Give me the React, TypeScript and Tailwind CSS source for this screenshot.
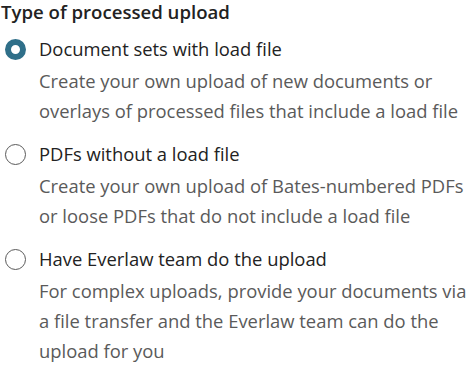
import React, { useState } from 'react';

const options = [
  {
    id: 'load',
    label: 'Document sets with load file',
    desc: 'Create your own upload of new documents or overlays of processed files that include a load file',
  },
  {
    id: 'pdf',
    label: 'PDFs without a load file',
    desc: 'Create your own upload of Bates-numbered PDFs or loose PDFs that do not include a load file',
  },
  {
    id: 'team',
    label: 'Have Everlaw team do the upload',
    desc: 'For complex uploads, provide your documents via a file transfer and the Everlaw team can do the upload for you',
  },
];

export default function App() {
  const [selected, setSelected] = useState('load');

  return (
    <div className="w-[474px] h-[367px] bg-white overflow-hidden" style={{ fontFamily: '"Open Sans", sans-serif' }}>
      <div className="text-[18.6px] leading-[24px] font-semibold text-[#222] pl-[1px]">Type of processed upload</div>
      <div className="flex flex-col gap-[13px] mt-[10px]">
        {options.map(opt => (
          <label key={opt.id} className="flex gap-[13px] cursor-pointer" onClick={() => setSelected(opt.id)}>
            <span className="pt-[5px] pl-[5px] shrink-0">
              {selected === opt.id ? (
                <span className="block w-[21px] h-[21px] rounded-full border-[6px] border-[#2f6f89] bg-white" />
              ) : (
                <span className="block w-[21px] h-[21px] rounded-full border-[1.5px] border-[#5a5a5a] bg-white" />
              )}
            </span>
            <span className="flex flex-col">
              <span className="text-[18.4px] leading-[30px] text-[#222]">{opt.label}</span>
              <span className="text-[18.4px] leading-[30px] text-[#5a5a5a] mt-[2px]">{opt.desc}</span>
            </span>
          </label>
        ))}
      </div>
    </div>
  );
}
